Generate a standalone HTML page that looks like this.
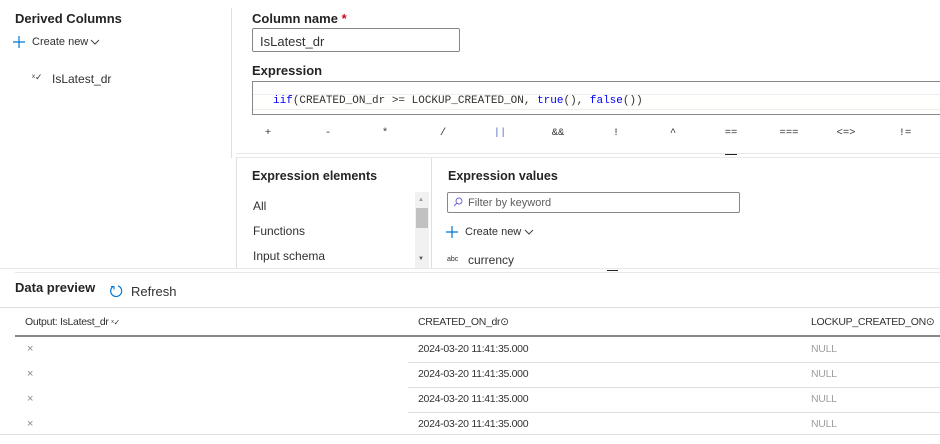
<!DOCTYPE html>
<html><head><meta charset="utf-8"><style>
body{margin:0;width:940px;height:444px;overflow:hidden;background:#fff;font-family:"Liberation Sans",sans-serif;color:#323130;position:relative}
.a{position:absolute;white-space:nowrap}
.b{font-weight:bold;font-size:13px;color:#252423}
.t{font-size:12px}
.m{font-family:"Liberation Mono",monospace;font-size:11px}
.hl{position:absolute;height:1px;background:#e1dfdd}
.op{position:absolute;top:127px;font-family:"Liberation Mono",monospace;font-size:10.5px;color:#333;transform:translateX(-50%)}
.s{font-size:11px}
.h{font-size:10.5px;letter-spacing:-0.3px}
</style></head><body>
<div class="a" style="left:231px;top:8px;width:1px;height:150px;background:#e1dfdd"></div>
<div class="a b" style="left:15px;top:11px">Derived Columns</div>
<svg class="a" style="left:13px;top:36px" width="12" height="12"><path d="M6 0V12M0 6H12" stroke="#0078d4" stroke-width="1.2"/></svg>
<div class="a s" style="left:32px;top:36px">Create new</div>
<svg class="a" style="left:90px;top:39px" width="10" height="7"><path d="M1 1L5 5L9 1" stroke="#444" fill="none"/></svg>
<div class="a s" style="left:32px;top:72px;font-size:9px">ˣ✓</div>
<div class="a t" style="left:52px;top:72px">IsLatest_dr</div>

<div class="a b" style="left:252px;top:11px">Column name <span style="color:#c50f1f">*</span></div>
<div class="a" style="left:252px;top:28px;width:206px;height:22px;border:1px solid #8a8886;border-radius:2px"></div>
<div class="a t" style="left:260px;top:34px;font-size:13px">IsLatest_dr</div>
<div class="a b" style="left:252px;top:63px">Expression</div>
<div class="a" style="left:252px;top:81px;width:700px;height:32px;border:1px solid #8a8886;border-right:none"></div>
<div class="a" style="left:253px;top:94px;width:687px;height:14px;border-top:1px solid #eee;border-bottom:1px solid #eee;background:#fffffe"></div>
<div class="a m" style="left:273px;top:95px"><span style="color:#0000ff">iif</span>(CREATED_ON_dr &gt;= LOCKUP_CREATED_ON, <span style="color:#0000ff">true</span>(), <span style="color:#0000ff">false</span>())</div>
<div class="op" style="left:268px">+</div><div class="op" style="left:328px">-</div><div class="op" style="left:385px">*</div><div class="op" style="left:443px">/</div><div class="op" style="left:500px;color:#4a6fc4">||</div><div class="op" style="left:558px">&amp;&amp;</div><div class="op" style="left:616px">!</div><div class="op" style="left:673px">^</div><div class="op" style="left:731px">==</div><div class="op" style="left:789px">===</div><div class="op" style="left:846px">&lt;=&gt;</div><div class="op" style="left:905px">!=</div>
<div class="a" style="left:725px;top:153px;width:12px;height:2px;background:#222"></div>
<div class="hl" style="left:236px;top:153px;width:704px;background:#e8e8e8"></div>
<div class="hl" style="left:236px;top:157px;width:704px;background:#e8e8e8"></div>
<div class="a" style="left:236px;top:158px;width:1px;height:110px;background:#e1dfdd"></div>
<div class="a" style="left:431px;top:158px;width:1px;height:110px;background:#e1dfdd"></div>
<div class="a b" style="left:252px;top:169px;font-size:12.5px">Expression elements</div>
<div class="a t" style="left:253px;top:199px">All</div>
<div class="a t" style="left:253px;top:224px">Functions</div>
<div class="a t" style="left:253px;top:249px">Input schema</div>
<div class="a" style="left:415px;top:192px;width:14px;height:76px;background:#f1f1f1"></div>
<div class="a" style="left:416px;top:208px;width:12px;height:20px;background:#c1c1c1"></div>
<div class="a" style="left:418px;top:197px;font-size:6px;color:#999">▲</div>
<div class="a" style="left:418px;top:256px;font-size:6px;color:#555">▼</div>
<div class="a b" style="left:448px;top:169px;font-size:12.5px">Expression values</div>
<div class="a" style="left:447px;top:192px;width:291px;height:19px;border:1px solid #8a8886;border-radius:2px"></div>
<svg class="a" style="left:453px;top:197px" width="10" height="10"><circle cx="6" cy="4" r="3" stroke="#6b69d6" fill="none"/><path d="M4 6L1 9" stroke="#6b69d6"/></svg>
<div class="a s" style="left:468px;top:197px;color:#605e5c">Filter by keyword</div>
<svg class="a" style="left:446px;top:226px" width="12" height="12"><path d="M6 0V12M0 6H12" stroke="#0078d4" stroke-width="1.2"/></svg>
<div class="a s" style="left:465px;top:226px">Create new</div>
<svg class="a" style="left:524px;top:229px" width="10" height="7"><path d="M1 1L5 5L9 1" stroke="#444" fill="none"/></svg>
<div class="a" style="left:447px;top:256px;font-size:7px">abc</div>
<div class="a t" style="left:468px;top:253px">currency</div>
<div class="hl" style="left:0;top:268px;width:940px;background:#e8e8e8"></div>
<div class="a" style="left:607px;top:270px;width:11px;height:1px;background:#222"></div>
<div class="hl" style="left:15px;top:272px;width:925px;background:#e8e8e8"></div>

<div class="a b" style="left:15px;top:280px">Data preview</div>
<svg class="a" style="left:109px;top:284px" width="14" height="14"><path d="M4 2.5A5.5 5.5 0 1 0 9 1.8" stroke="#0078d4" stroke-width="1.2" fill="none"/><path d="M2 2.5H5V5.5" stroke="#0078d4" fill="none" stroke-width="1.1"/></svg>
<div class="a" style="left:131px;top:284px;font-size:13px">Refresh</div>
<div class="hl" style="left:0;top:307px;width:940px"></div>
<div class="a h" style="left:25px;top:316px">Output: IsLatest_dr <span style="font-size:8px">ˣ✓</span></div>
<div class="a h" style="left:418px;top:316px">CREATED_ON_dr⊙</div>
<div class="a h" style="left:811px;top:316px">LOCKUP_CREATED_ON⊙</div>
<div class="a" style="left:15px;top:335px;width:925px;height:2px;background:#8a8886"></div>
<div class="a s" style="left:27px;top:343px;color:#8a8886">×</div><div class="a h" style="left:418px;top:343px">2024-03-20 11:41:35.000</div><div class="a h" style="left:811px;top:343px;color:#a19f9d">NULL</div>
<div class="hl" style="left:408px;top:362px;width:532px"></div>
<div class="a s" style="left:27px;top:368px;color:#8a8886">×</div><div class="a h" style="left:418px;top:368px">2024-03-20 11:41:35.000</div><div class="a h" style="left:811px;top:368px;color:#a19f9d">NULL</div>
<div class="hl" style="left:408px;top:387px;width:532px"></div>
<div class="a s" style="left:27px;top:393px;color:#8a8886">×</div><div class="a h" style="left:418px;top:393px">2024-03-20 11:41:35.000</div><div class="a h" style="left:811px;top:393px;color:#a19f9d">NULL</div>
<div class="hl" style="left:408px;top:412px;width:532px"></div>
<div class="a s" style="left:27px;top:418px;color:#8a8886">×</div><div class="a h" style="left:418px;top:418px">2024-03-20 11:41:35.000</div><div class="a h" style="left:811px;top:418px;color:#a19f9d">NULL</div>
<div class="hl" style="left:0;top:434px;width:940px"></div>
</body></html>
